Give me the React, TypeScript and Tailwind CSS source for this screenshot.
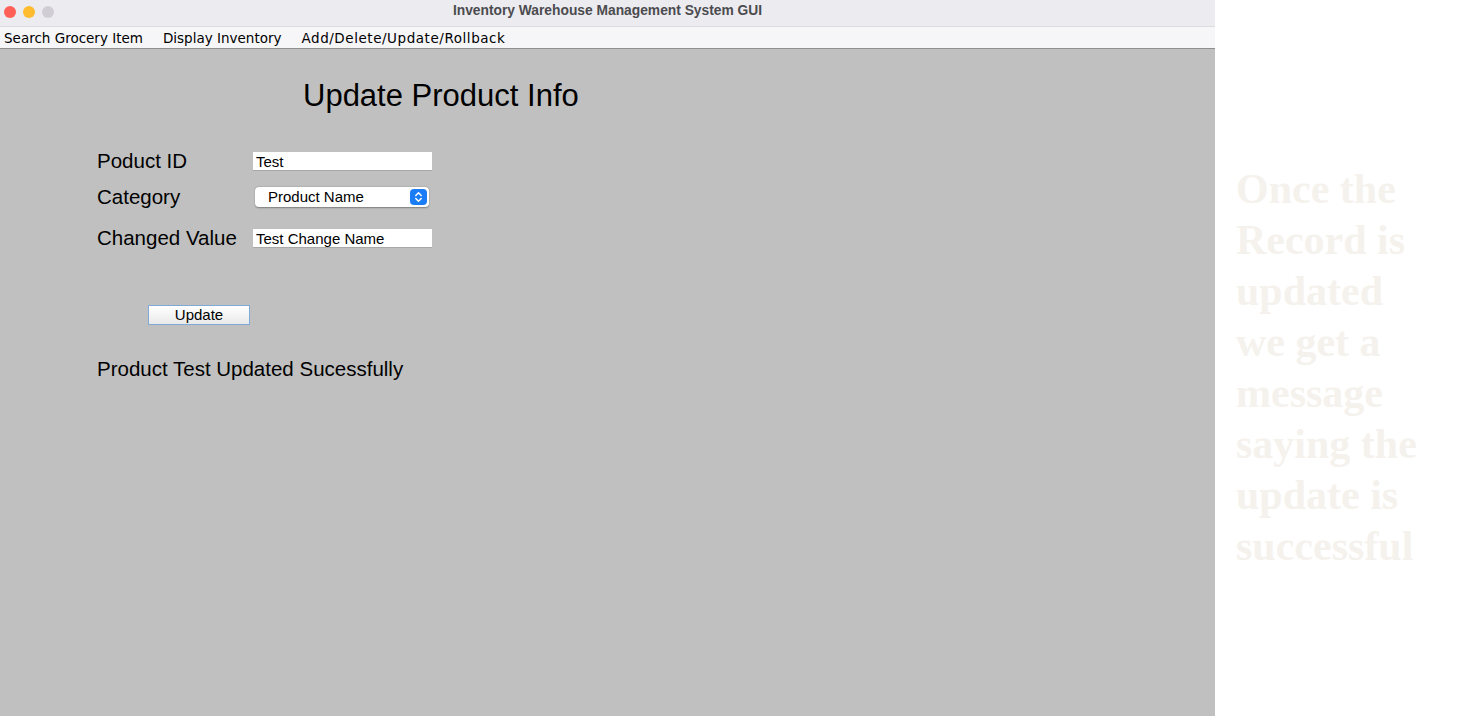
import { useState } from 'react';

/** Swing-style "Update Product Info" window, framed like a macOS screenshot */
export default function App() {
  const [productId, setProductId] = useState('Test');
  const [changed, setChanged] = useState('Test Change Name');

  return (
    <div className="flex h-[718px] w-[1458px] overflow-hidden bg-white">
      <div className="flex h-[716px] w-[1215px] shrink-0 flex-col bg-[#c0c0c0]">
        {/* title bar */}
        <div className="relative flex h-[27px] shrink-0 items-center justify-center border-b border-[#dcdbe0] bg-[#ecebf0]">
          <div className="absolute left-[4px] top-[6px] flex gap-[7px]">
            <span className="h-[12px] w-[12px] rounded-full bg-[#fe5f57]" />
            <span className="h-[12px] w-[12px] rounded-full bg-[#febc2e]" />
            <span className="h-[12px] w-[12px] rounded-full bg-[#d0ced4]" />
          </div>
          <span className="-mt-[3px] font-['Liberation_Sans',sans-serif] text-[13.8px] font-bold text-[#4b4b4f]">
            Inventory Warehouse Management System GUI
          </span>
        </div>

        {/* menu bar */}
        <div className="flex h-[22px] shrink-0 items-center gap-[20px] border-b border-[#8f8f8f] bg-[#f6f6f8] pl-[4px] pt-[1px] font-['DejaVu_Sans',sans-serif] text-[13.5px] text-black">
          <span>Search Grocery Item</span>
          <span>Display Inventory</span>
          <span className="tracking-[0.55px]">Add/Delete/Update/Rollback</span>
        </div>

        {/* form */}
        <div className="flex flex-col pl-[97px] font-['Liberation_Sans',Arial,sans-serif] text-black">
          <h1 className="ml-[206px] mt-[29px] h-[36px] text-[31px] leading-[36px]">Update Product Info</h1>

          <div className="mt-[37px] flex h-[20px] items-center">
            <span className="w-[156px] text-[20.5px] leading-[20px]">Poduct ID</span>
            <input
              value={productId}
              onChange={(e) => setProductId(e.target.value)}
              className="h-[19px] w-[179px] border-b border-[#a8a8a8] bg-white pl-[3px] pt-[1px] text-[15px] leading-[18px] outline-none"
            />
          </div>

          <div className="mt-[16px] flex h-[20px] items-center">
            <span className="w-[158px] text-[20.5px] leading-[20px]">Category</span>
            <div className="flex h-[20px] w-[174px] items-center rounded-[4px] bg-white pl-[13px] pr-[2px] text-[15px] shadow-[0_0.5px_1.5px_rgba(0,0,0,0.35)]">
              <span className="flex-1">Product Name</span>
              <span className="flex h-[16px] w-[17px] items-center justify-center rounded-[4px] bg-[#1a7df6]">
                <svg width="9" height="12" viewBox="0 0 9 12" fill="none" stroke="white" strokeWidth="1.5" strokeLinecap="round" strokeLinejoin="round">
                  <path d="M1.8 4.5 4.5 1.8 7.2 4.5" />
                  <path d="M1.8 7.5 4.5 10.2 7.2 7.5" />
                </svg>
              </span>
            </div>
          </div>

          <div className="mt-[21px] flex h-[20px] items-center">
            <span className="w-[156px] text-[20.5px] leading-[20px]">Changed Value</span>
            <input
              value={changed}
              onChange={(e) => setChanged(e.target.value)}
              className="h-[19px] w-[179px] border-b border-[#a8a8a8] bg-white pl-[3px] pt-[1px] text-[15px] leading-[18px] outline-none"
            />
          </div>

          <button className="ml-[51px] mt-[57px] h-[20px] w-[102px] border border-[#7fa9d6] bg-gradient-to-b from-[#ffffff] to-[#e9e9e9] text-[15px] leading-[18px]">
            Update
          </button>

          <p className="mt-[32px] h-[24px] text-[20.5px] leading-[24px]">Product Test Updated Sucessfully</p>
        </div>
      </div>

      {/* caption */}
      <div className="pl-[21px] pt-[164px] font-['Liberation_Serif',serif] text-[42px] font-bold leading-[51px] text-[#f5f2ed]">
        Once the<br />
        Record is<br />
        updated<br />
        we get a<br />
        message<br />
        saying the<br />
        update is<br />
        successful
      </div>
    </div>
  );
}
